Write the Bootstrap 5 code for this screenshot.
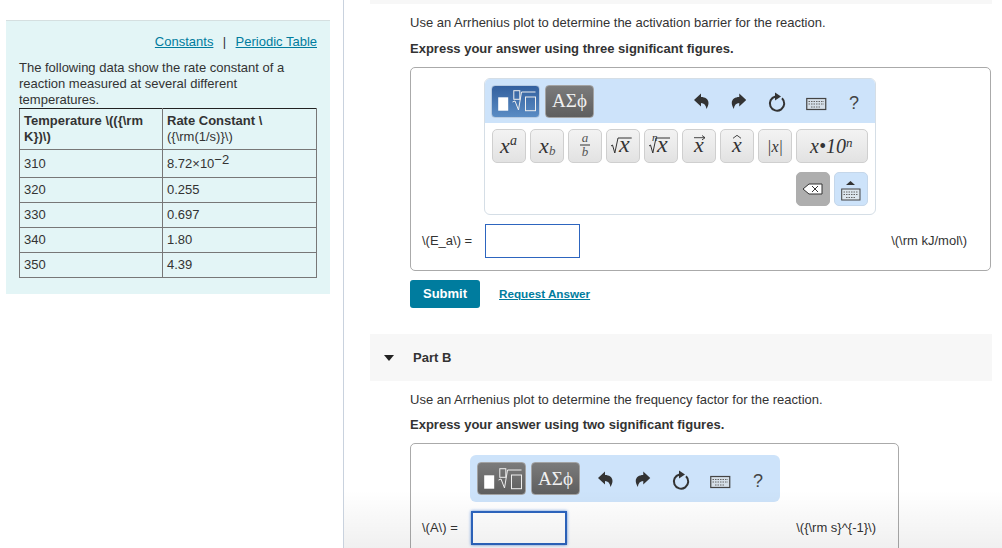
<!DOCTYPE html>
<html lang="en">
<head>
<meta charset="utf-8">
<title>Arrhenius plot</title>
<link href="https://cdn.jsdelivr.net/npm/bootstrap@5.3.0/dist/css/bootstrap.min.css" rel="stylesheet">
<style>
html,body{height:548px;overflow:hidden;background:#fff}
body{font-family:"Liberation Sans",Arial,sans-serif;font-size:13px;line-height:16px;color:#333}
.pg{height:548px}
.lefty{width:344px;border-right:1px solid #c9d2de;padding:20px 13px 0 6px;flex:none}
.infobox{background:#e3f5f6;border-top:1px solid #d5dfe0;height:274px;padding:13px 13px 0 13px}
.lk{color:#007c9e;text-decoration:underline}
.toplinks{text-align:right;height:26px}
.toplinks .sep{margin:0 9.4px}
.intro{max-width:270px}
.datat{width:298px;border:1px solid #222;border-collapse:collapse;table-layout:fixed;line-height:16px;font-size:13px}
.datat td{border:1px solid #777;padding:0 4px;vertical-align:middle}
.datat tr:first-child td{border-top-color:#222}
.datat .c1{width:143px}
.datat sup{font-size:13px;top:-.25em;line-height:0;vertical-align:baseline;position:relative}
.righty{padding:0 10px 0 26px;min-width:0;position:relative}
.topstrip{height:4px;background:#f7f7f7}
.inner{padding:0 0 0 40px}
.ptxt{margin:0}
.answerbox{border:1px solid #aaa;border-radius:5px;position:relative}
.box1{height:204px;margin-top:10px;width:581px}
.box2{height:120px;margin-top:10px;width:489px}
.ed{position:absolute;background:#fff;border:1px solid #d5dee6;border-radius:6px;overflow:hidden}
.ed1{left:73px;top:10px;width:392px;height:137px}
.tb{background:#cde3fa;display:flex;align-items:center;padding:0 6px}
.tb1{height:44px}
.tb2{position:absolute;left:59px;top:11px;width:310px;height:47px;border-radius:6px;background:#cde3fa;display:flex;align-items:center;padding:0 7px}
.mode{width:49px;height:33px;border-radius:4px;border:1px solid #999;display:flex;align-items:center;justify-content:center;color:#eee;margin-right:5px;flex:none}
.mode.tpl{background:linear-gradient(#33609e,#5a8cc4);border-color:#b7cbe2}
.mode.gry{background:linear-gradient(#7b7b7b,#5e5e5e);border-color:#a3a3a3}
.greek{font-family:"Liberation Serif",serif;font-size:19px;color:#f0f0f0}
.toolsvg{flex:none;display:block}
.tl1{margin-left:90px}
.tl2{margin-left:8px}
.mbtn{width:34px;height:34px;border:1px solid #cfcfcf;border-radius:5px;background:linear-gradient(#f3f3f3,#e2e2e2);flex:none;padding:0;display:block}
.mbtn svg{display:block}
.mbtn text{font-family:"Liberation Serif",serif;font-style:italic;fill:#333}
.mrow{display:flex;gap:4px;padding:6px 0 0 7px}
.mrow2{display:flex;gap:4px;justify-content:flex-end;padding:9px 7px 0 0}
.wide{width:72px}
.eqrow{position:absolute;left:0;right:0;display:flex;align-items:center}
.eqlab{width:74px;padding-left:11px;flex:none}
.inp{width:95px;height:34px;border:1px solid #2d65bf;background:#fff;display:block}
.inp.focus{width:96px;box-shadow:0 0 3px #5a8fdc;border-width:2px}
.unit{margin-left:auto}
.subbtn{width:70px;height:28px;background:#007c9e;color:#fff;border:0;border-radius:3px;font-weight:700;font-size:13px;padding:0;line-height:28px}
.reqlk{color:#007c9e;font-weight:700;font-size:11.7px;text-decoration:underline;margin-left:19px}
.partb{height:47px;background:#f7f7f7;margin-top:26px;display:flex;align-items:center;padding-left:14px;font-weight:700}
.tri{width:0;height:0;border-left:5px solid transparent;border-right:5px solid transparent;border-top:6px solid #222;margin-right:19px}
.actions{display:flex;align-items:center;margin-top:9px}
.fadeb{position:absolute;left:0;right:0;bottom:0;height:58px;background:linear-gradient(rgba(0,0,0,0),rgba(0,0,0,.06));pointer-events:none}
</style>
</head>
<body>
<div class="pg d-flex">
 <div class="lefty">
  <div class="infobox">
   <div class="toplinks"><a class="lk" href="#">Constants</a><span class="sep">|</span><a class="lk" href="#">Periodic Table</a></div>
   <div class="intro">The following data show the rate constant of a reaction measured at several different temperatures.</div>
   <table class="datat">
    <tr style="height:41px"><td class="c1"><b>Temperature \(({\rm K})\)</b></td><td><b>Rate Constant \</b><br>({\rm(1/s)}\)</td></tr>
    <tr style="height:28px"><td>310</td><td>8.72×10<sup>−2</sup></td></tr>
    <tr style="height:25px"><td>320</td><td>0.255</td></tr>
    <tr style="height:25px"><td>330</td><td>0.697</td></tr>
    <tr style="height:25px"><td>340</td><td>1.80</td></tr>
    <tr style="height:25px"><td>350</td><td>4.39</td></tr>
   </table>
  </div>
 </div>
 <div class="righty flex-grow-1">
  <div class="topstrip"></div>
  <div class="inner">
   <p class="ptxt" style="margin-top:11px">Use an Arrhenius plot to determine the activation barrier for the reaction.</p>
   <p class="ptxt fw-bold" style="margin-top:10px">Express your answer using three significant figures.</p>
   <div class="answerbox box1">
    <div class="ed ed1">
     <div class="tb tb1">
      <div class="mode tpl"><svg width="42" height="28" viewBox="0 0 42 28"><use href="#tplicon"/></svg></div>
      <div class="mode gry greek">ΑΣϕ</div>
      <svg class="toolsvg tl1" width="176" height="24" viewBox="0 0 176 24"><use href="#toolicons"/></svg>
     </div>
     <div class="mrow">
      <button class="mbtn"><svg width="32" height="32"><text x="7" y="22.700" font-size="22">x</text><text x="17" y="15" font-size="14">a</text></svg></button>
      <button class="mbtn"><svg width="32" height="32"><text x="8" y="22.700" font-size="22">x</text><text x="18" y="25" font-size="13" style="fill:#555">b</text></svg></button>
      <button class="mbtn"><svg width="32" height="32"><text x="16" y="12" font-size="13" text-anchor="middle" style="fill:#555">a</text><path d="M11 15h10" stroke="#333"/><text x="16" y="25.700" font-size="13" text-anchor="middle" style="fill:#555">b</text></svg></button>
      <button class="mbtn"><svg width="32" height="32"><path d="M4 16l1.500-1 2.300 8L11 8H24.700" fill="none" stroke="#333"/><text x="12" y="22" font-size="24">x</text></svg></button>
      <button class="mbtn"><svg width="32" height="32"><text x="7" y="11" font-size="11">n</text><path d="M4 16l1.500-1 2.300 8L11 8H25" fill="none" stroke="#333"/><text x="12" y="22" font-size="24">x</text></svg></button>
      <button class="mbtn"><svg width="32" height="32"><path d="M11 7.700H22M19 5.500l3 2.200-3 2.200" fill="none" stroke="#333" stroke-width=".9"/><text x="11" y="22" font-size="22">x</text></svg></button>
      <button class="mbtn"><svg width="32" height="32"><path d="M12 8.300l4-3 4 3" fill="none" stroke="#333" stroke-width=".9"/><text x="11" y="22" font-size="22">x</text></svg></button>
      <button class="mbtn"><svg width="32" height="32"><text x="16" y="21.700" font-size="16" text-anchor="middle">|x|</text></svg></button>
      <button class="mbtn wide"><svg width="70" height="32"><text x="13" y="23" font-size="20">x•10</text><text x="49" y="17" font-size="13">n</text></svg></button>
     </div>
     <div class="mrow2">
      <button class="mbtn" style="background:#aeaeae;border-color:#aeaeae"><svg width="32" height="32"><path d="M6 16l6-5h13v10H12Z" fill="#fff" stroke="#333"/><path d="M15 13l6 6M21 13l-6 6" stroke="#333" fill="none"/></svg></button>
      <button class="mbtn" style="background:#cde3fa;border-color:#c5d7ea"><svg width="32" height="32"><path d="M15.500 8l4.500 4H11Z" fill="#333"/><rect x="6.700" y="16" width="18.300" height="11" fill="#dde6ee" stroke="#444"/><path d="M8.500 19h15M8.500 21.500h15M11 24.500h10" stroke="#666" stroke-dasharray="1.500 1"/></svg></button>
     </div>
    </div>
    <div class="eqrow" style="top:156px">
     <div class="eqlab">\(E_a\) =</div><span class="inp"></span><span class="unit" style="padding-right:23px">\(\rm kJ/mol\)</span>
    </div>
   </div>
   <div class="actions"><button class="subbtn btn">Submit</button><a class="reqlk" href="#">Request Answer</a></div>
  </div>
  <div class="partb"><span class="tri"></span>Part B</div>
  <div class="inner">
   <p class="ptxt" style="margin-top:11px">Use an Arrhenius plot to determine the frequency factor for the reaction.</p>
   <p class="ptxt fw-bold" style="margin-top:9px">Express your answer using two significant figures.</p>
   <div class="answerbox box2">
    <div class="tb2">
      <div class="mode gry"><svg width="42" height="28" viewBox="0 0 42 28"><use href="#tplicon"/></svg></div>
      <div class="mode gry greek">ΑΣϕ</div>
      <svg class="toolsvg tl2" width="176" height="24" viewBox="0 0 176 24"><use href="#toolicons"/></svg>
    </div>
    <div class="eqrow" style="top:67px">
     <div class="eqlab" style="width:60px">\(A\) =</div><span class="inp focus"></span><span class="unit" style="padding-right:22px">\({\rm s}^{-1}\)</span>
    </div>
   </div>
  </div>
  <div class="fadeb"></div>
 </div>
</div>
<svg width="0" height="0" style="position:absolute">
 <defs>
  <g id="tplicon"><rect x="3.200" y="10.300" width="10" height="13.400" fill="#fff"/><rect x="18.800" y="3.700" width="6" height="8.600" fill="none" stroke="#eee"/><path d="M17.500 15l2.500-1 3.500 9 3-18h14" fill="none" stroke="#eee"/><rect x="30.500" y="10" width="10" height="13.700" fill="none" stroke="#eee"/></g>
  <g id="undoic"><path d="M5 11l7-6.500V8c4 0 7.500 2 7.500 6 0 2-1 4-2 6-.5-4-2.500-6-5.500-6v3.500Z" fill="#333"/></g>
  <g id="toolicons">
   <use href="#undoic"/>
   <use href="#undoic" transform="translate(62.250 0) scale(-1 1)"/>
   <path d="M93 9.200a7.200 7.200 0 1 1-6.500-1.800" fill="none" stroke="#333" stroke-width="2"/><path d="M86 3.500l6 4-6 4Z" fill="#333"/>
   <rect x="117.750" y="9.500" width="19" height="11" fill="#d5dfe8" stroke="#444" stroke-width="1.200"/><path d="M119.500 12.500h15.500M119.500 15h15.500M122 18h10" stroke="#666" stroke-dasharray="1.500 1"/>
   <text x="165" y="19.500" font-family="Liberation Sans" font-size="18" fill="#444" text-anchor="middle">?</text>
  </g>
 </defs>
</svg>
<script src="https://cdn.jsdelivr.net/npm/bootstrap@5.3.0/dist/js/bootstrap.bundle.min.js"></script>
</body>
</html>
